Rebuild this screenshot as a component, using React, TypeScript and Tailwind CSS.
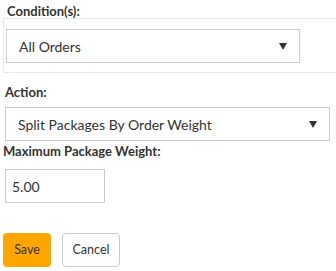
import React from "react";

function Caret() {
  return (
    <svg width="8" height="7" viewBox="0 0 8 7" className="shrink-0">
      <path d="M0 0 H8 L4 7 Z" fill="#333" />
    </svg>
  );
}

function FakeSelect({ value, className }: { value: string; className: string }) {
  return (
    <div className={`flex items-center justify-between border border-[#cccccc] bg-white text-[14px] text-[#333] ${className}`}>
      <span>{value}</span>
      <Caret />
    </div>
  );
}

export default function App() {
  return (
    <div className="w-[336px] h-[271px] bg-white text-[#333] font-['Lato',sans-serif] overflow-hidden">
      {/* condition block */}
      <div className="pl-[7px] pt-[4px] text-[13px] leading-[14px] font-bold">Condition(s):</div>
      <div className="ml-[3px] h-[55px] border border-r-0 border-[#e8e8e8] pt-[10px] pl-[2px]">
        <FakeSelect value="All Orders" className="w-[294px] h-[34px] pl-[12px] pr-[12px]" />
      </div>

      {/* action block */}
      <div className="pl-[5px] pt-[12px] text-[13px] leading-[14px] font-bold">Action:</div>
      <FakeSelect
        value="Split Packages By Order Weight"
        className="mt-[8px] ml-[5px] w-[325px] h-[34px] pl-[12px] pr-[12px]"
      />

      <div className="pl-[3px] pt-[3px] text-[13px] leading-[14px] font-bold">Maximum Package Weight:</div>
      <div className="mt-[11px] ml-[5px] w-[100px] h-[34px] border border-[#cccccc] flex items-center pl-[6px] text-[14px]">
        5.00
      </div>

      <div className="mt-[30px] ml-[3px] flex gap-[11px]">
        <button className="w-[48px] h-[34px] rounded-[4px] bg-[#ffa500] text-[12.5px] text-[#333]">Save</button>
        <button className="w-[58px] h-[34px] rounded-[4px] border border-[#cccccc] bg-white text-[12.5px] text-[#333]">
          Cancel
        </button>
      </div>
    </div>
  );
}
